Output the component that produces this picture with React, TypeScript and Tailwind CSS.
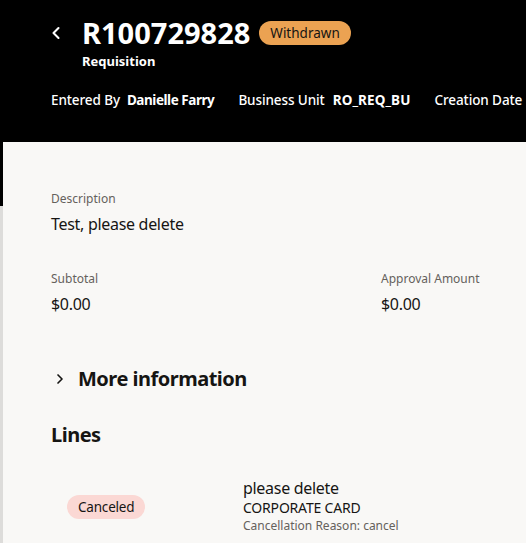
import { ChevronLeft, ChevronRight } from 'lucide-react';

export default function App() {
  return (
    <div className="h-[543px] w-[526px] overflow-hidden bg-black font-['Noto_Sans',sans-serif]">
      <header className="h-[142px] bg-black pl-[51px] text-white">
        <div className="flex items-center pt-[15px]">
          <ChevronLeft className="-ml-[5px] mr-[16px] h-[20px] w-[20px]" strokeWidth={2.5} />
          <h1 className="text-[29px] font-bold leading-[36px]">R100729828</h1>
          <span className="ml-[9px] rounded-full bg-[#eba252] px-[11px] py-[2px] text-[13.5px] leading-[20px] text-[#161513]">
            Withdrawn
          </span>
        </div>
        <div className="mt-[1px] pl-[31px] text-[13px] font-bold leading-[18px]">Requisition</div>
        <div className="mt-[21px] flex whitespace-nowrap text-[13.5px] leading-[18px] tracking-[-0.1px]">
          <span className="font-medium">Entered By</span>
          <span className="ml-[7px] font-bold tracking-[-0.45px]">Danielle Farry</span>
          <span className="ml-[24px] font-medium">Business Unit</span>
          <span className="ml-[8px] font-bold tracking-[0.1px]">RO_REQ_BU</span>
          <span className="ml-[24px] font-medium">Creation Date</span>
        </div>
      </header>
      <div className="flex">
        <div className="flex w-[3px] flex-col">
          <div className="h-[64px] bg-black" />
          <div className="h-[400px] bg-[#dddcda]" />
        </div>
        <main className="flex-1 bg-[#f9f8f6] pl-[48px] pt-[49px] text-[#161513]">
          <div className="text-[12px] leading-[16px] text-[#65615c]">Description</div>
          <div className="mt-[7px] text-[16px] leading-[20px] tracking-[-0.3px]">Test, please delete</div>
          <div className="mt-[37px] flex">
            <div className="w-[330px]">
              <div className="text-[12px] leading-[16px] text-[#65615c]">Subtotal</div>
              <div className="mt-[7px] text-[16px] leading-[20px] tracking-[-0.3px]">$0.00</div>
            </div>
            <div>
              <div className="text-[12px] leading-[16px] text-[#65615c]">Approval Amount</div>
              <div className="mt-[7px] text-[16px] leading-[20px] tracking-[-0.3px]">$0.00</div>
            </div>
          </div>
          <div className="mt-[52px] flex items-center">
            <ChevronRight className="ml-[1px] mr-[10px] h-[16px] w-[16px]" strokeWidth={2.5} />
            <h2 className="text-[20px] font-bold leading-[26px] tracking-[-0.5px]">More information</h2>
          </div>
          <h2 className="mt-[30px] text-[20px] font-bold leading-[26px] tracking-[-0.5px]">Lines</h2>
          <div className="mt-[31px] flex items-center pb-[20px]">
            <div className="w-[192px] pl-[16px]">
              <span className="inline-block rounded-full bg-[#fbd8d4] px-[11px] py-[2px] text-[13.5px] leading-[20px] tracking-[-0.2px]">
                Canceled
              </span>
            </div>
            <div className="-mt-[1px]">
              <div className="text-[16px] leading-[20px] tracking-[-0.3px]">please delete</div>
              <div className="text-[14px] leading-[20px] tracking-[-0.2px]">CORPORATE CARD</div>
              <div className="text-[12px] leading-[16px] text-[#65615c]">Cancellation Reason: cancel</div>
            </div>
          </div>
        </main>
      </div>
    </div>
  );
}
